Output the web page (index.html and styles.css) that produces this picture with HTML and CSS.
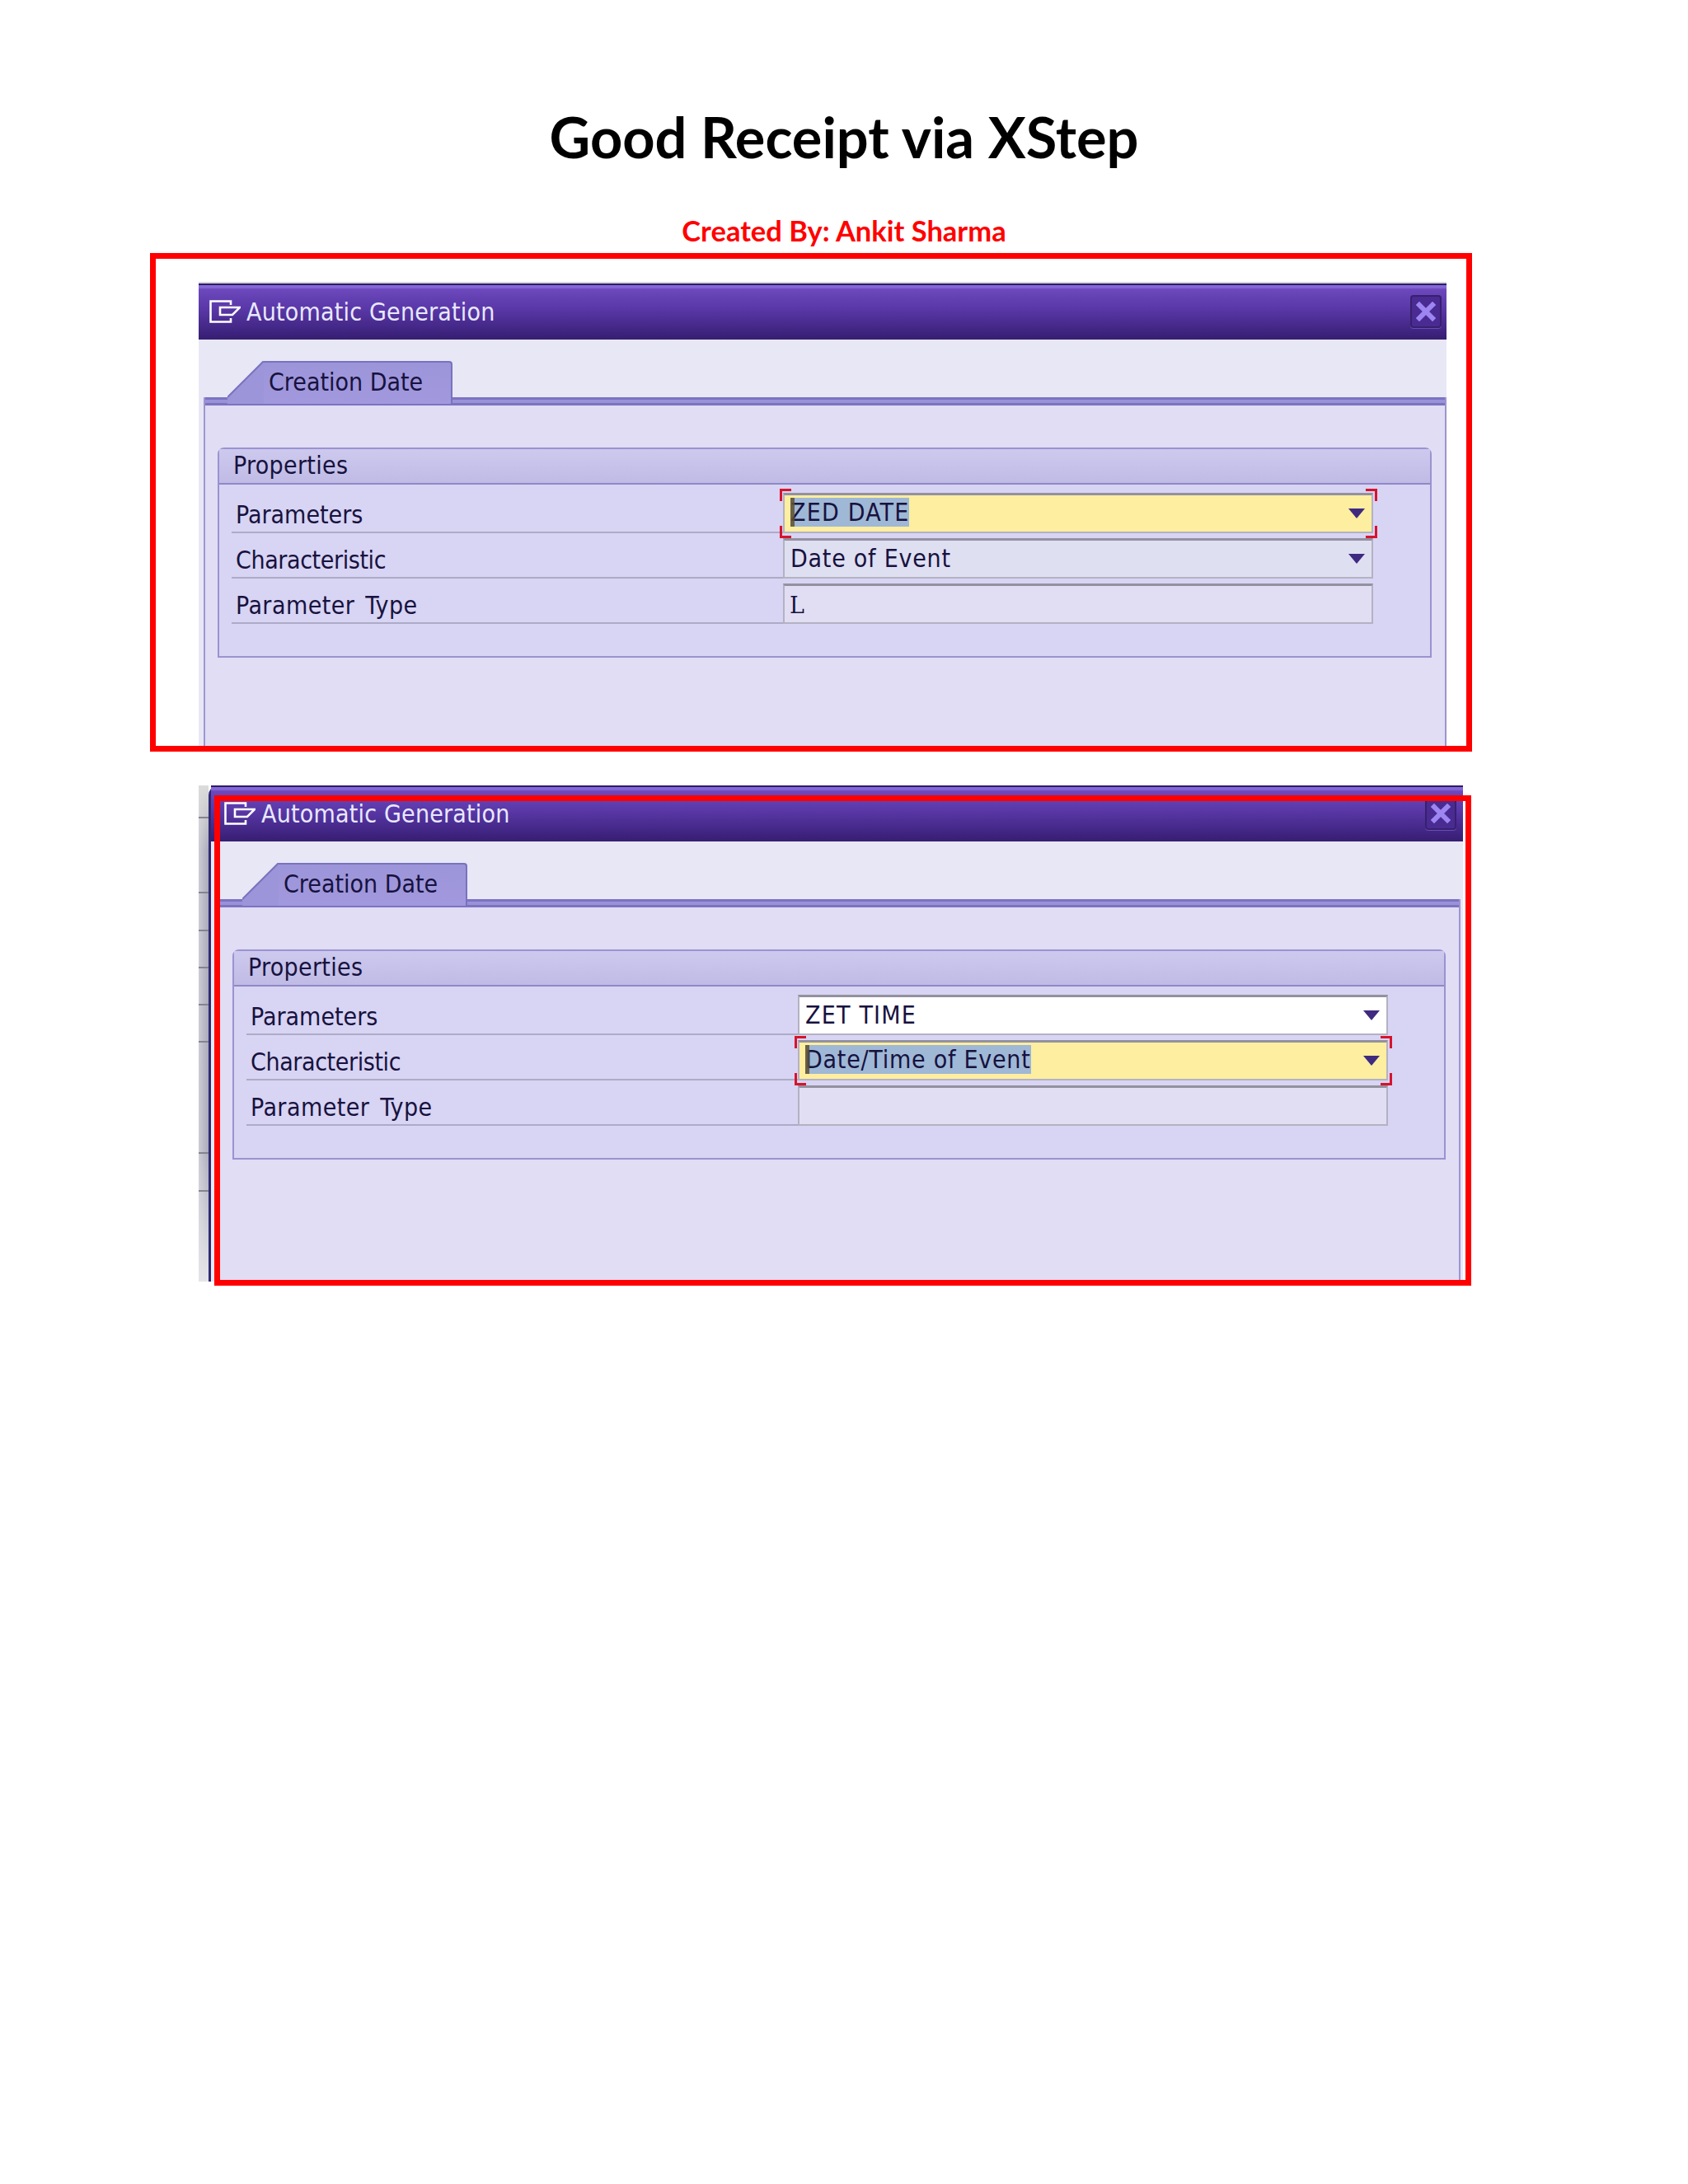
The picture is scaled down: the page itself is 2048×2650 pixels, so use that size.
FILE: index.html
```html
<!DOCTYPE html>
<html lang="en">
<head>
<meta charset="utf-8">
<title>Good Receipt via XStep</title>
<link rel="stylesheet" href="styles.css">
</head>
<body>
<main class="page">
  <h1 class="title">Good Receipt via XStep</h1>
  <p class="byline">Created By: Ankit Sharma</p>

  <section class="shot shot-one">
    <div class="dialog">
      <header class="titlebar">
        <svg class="win-icon" viewBox="0 0 38 28" aria-hidden="true"><path d="M26 6V1.5H1.5V26.5H26V22M13 18V9H37L28 18Z" fill="none" stroke="#fff" stroke-width="2.6"/></svg>
        <span class="title-text">Automatic Generation</span>
        <span class="close"><svg viewBox="0 0 24 24" aria-hidden="true"><path d="M4 4L20 20M20 4L4 20" stroke="#9d85f2" stroke-width="6" stroke-linecap="square"/></svg></span>
      </header>
      <div class="tabs">
        <div class="tab">
          <svg class="tab-slant" viewBox="0 0 44 52" preserveAspectRatio="none" aria-hidden="true"><path d="M0 44L44 0V52H0Z" fill="#9d95d9"/><path d="M0 44L44 0" stroke="#7a72be" stroke-width="2"/></svg>
          <span class="tab-label">Creation Date</span>
        </div>
      </div>
      <div class="panel">
        <div class="group">
          <div class="group-head">Properties</div>
          <div class="group-body">
            <div class="row">
              <span class="label">Parameters</span>
              <div class="field field-focus">
                <span class="sel upper"><i class="caret"></i>ZED DATE</span>
                <i class="arrow"></i>
                <i class="corner tl"></i><i class="corner tr"></i><i class="corner bl"></i><i class="corner br"></i>
              </div>
            </div>
            <div class="row">
              <span class="label label-tight">Characteristic</span>
              <div class="field field-off"><span class="val">Date of Event</span><i class="arrow"></i></div>
            </div>
            <div class="row">
              <span class="label label-wide">Parameter Type</span>
              <div class="field field-plain"><span class="val slab">L</span></div>
            </div>
          </div>
        </div>
      </div>
    </div>
  </section>

  <section class="shot shot-two">
    <div class="side-strip"></div>
    <div class="dialog dialog-framed">
      <header class="titlebar">
        <svg class="win-icon" viewBox="0 0 38 28" aria-hidden="true"><path d="M26 6V1.5H1.5V26.5H26V22M13 18V9H37L28 18Z" fill="none" stroke="#fff" stroke-width="2.6"/></svg>
        <span class="title-text">Automatic Generation</span>
        <span class="close"><svg viewBox="0 0 24 24" aria-hidden="true"><path d="M4 4L20 20M20 4L4 20" stroke="#9d85f2" stroke-width="6" stroke-linecap="square"/></svg></span>
      </header>
      <div class="tabs">
        <div class="tab">
          <svg class="tab-slant" viewBox="0 0 44 52" preserveAspectRatio="none" aria-hidden="true"><path d="M0 44L44 0V52H0Z" fill="#9d95d9"/><path d="M0 44L44 0" stroke="#7a72be" stroke-width="2"/></svg>
          <span class="tab-label">Creation Date</span>
        </div>
      </div>
      <div class="panel">
        <div class="group">
          <div class="group-head">Properties</div>
          <div class="group-body">
            <div class="row">
              <span class="label">Parameters</span>
              <div class="field field-white"><span class="val upper">ZET TIME</span><i class="arrow"></i></div>
            </div>
            <div class="row">
              <span class="label label-tight">Characteristic</span>
              <div class="field field-focus">
                <span class="sel"><i class="caret"></i>Date/Time of Event</span>
                <i class="arrow"></i>
                <i class="corner tl"></i><i class="corner tr"></i><i class="corner bl"></i><i class="corner br"></i>
              </div>
            </div>
            <div class="row">
              <span class="label label-wide">Parameter Type</span>
              <div class="field field-plain"></div>
            </div>
          </div>
        </div>
      </div>
    </div>
  </section>

  <div class="redbox redbox-one"></div>
  <div class="redbox redbox-two"></div>
</main>
</body>
</html>
```

FILE: styles.css
```css
* { box-sizing: border-box; }
html, body { margin: 0; background: #fff; }
.page { position: relative; width: 2048px; height: 2650px; padding-top: 122px; overflow: hidden; }

.title {
  margin: 0; height: 88px; text-align: center;
  font: 700 68.5px/88px Lato, "Liberation Sans", sans-serif; color: #000;
}
.byline {
  margin: 50px 0 0; height: 40px; text-align: center;
  font: 700 34.5px/40px Lato, "Liberation Sans", sans-serif; color: #f00;
}

.shot { display: flex; margin-left: 241px; overflow: hidden; }
.shot-one { margin-top: 42px; height: 565px; border-top: 2px solid #d4d4d8; width: 1514px; }
.shot-two { margin-top: 46px; height: 602px; width: 1534px; }

.side-strip {
  flex: none; width: 12px; height: 100%;
  background:
    linear-gradient(to bottom, #85838f 0 0) 0 38px / 100% 2px no-repeat,
    linear-gradient(to bottom, #85838f 0 0) 0 129px / 100% 2px no-repeat,
    linear-gradient(to bottom, #85838f 0 0) 0 175px / 100% 2px no-repeat,
    linear-gradient(to bottom, #85838f 0 0) 0 220px / 100% 2px no-repeat,
    linear-gradient(to bottom, #85838f 0 0) 0 265px / 100% 2px no-repeat,
    linear-gradient(to bottom, #85838f 0 0) 0 310px / 100% 2px no-repeat,
    linear-gradient(to bottom, #85838f 0 0) 0 445px / 100% 2px no-repeat,
    linear-gradient(to bottom, #85838f 0 0) 0 491px / 100% 2px no-repeat,
    linear-gradient(to bottom, #dcdcdc 0, transparent 80px, transparent 440px, #e4e4e8 600px),
    linear-gradient(to right, #cdcdd6, #aaaabb);
}

.dialog {
  --inset: 6px; --end: 0px; --pad: 13px; --close-end: 6px;
  flex: none; width: 1514px; height: 100%;
  background: #e7e7f6;
  font-family: "DejaVu Sans", "Liberation Sans", sans-serif;
  font-stretch: condensed;
  color: #17123f;
}
.dialog-framed {
  --inset: 9px; --end: 3px; --pad: 16px; --close-end: 8px;
  width: 1522px; border-left: 3px solid #2f2a72; border-top-left-radius: 12px;
}

.titlebar {
  display: flex; align-items: center; height: 68px; padding: 0 var(--close-end) 0 var(--pad);
  background: linear-gradient(to bottom, #2d1c66 0 2px, #8468d6 2px 5px, #6c48bc 7px, #5a38a8 30px, #3a2078 64px, #35206e 68px);
}
.win-icon { flex: none; width: 38px; height: 28px; margin-right: 7px; }
.title-text { font-size: 30px; letter-spacing: .2px; color: #e8e8ff; }
.close {
  margin-left: auto; display: flex; align-items: center; justify-content: center;
  width: 38px; height: 40px; background: #4a2b92; border: 2px solid #38206f; border-radius: 4px; box-shadow: 0 1px 0 #6a4cb4;
}
.close svg { width: 24px; height: 24px; }

.tabs { display: flex; align-items: flex-end; height: 70px; padding-left: calc(var(--inset) + 29px); }
.tab { position: relative; z-index: 1; display: flex; height: 52px; margin-bottom: -8px; }
.tab-slant { flex: none; width: 44px; height: 52px; }
.tab-label {
  width: 229px; padding: 5px 0 0 6px; font-size: 30px; line-height: 38px;
  background: linear-gradient(to bottom, #9d95d9, #a198dd); border-top: 2px solid #7a72be; border-right: 2px solid #7a72be; border-top-right-radius: 4px;
}

.panel {
  margin: 0 var(--end) 0 var(--inset); height: 600px;
  background: linear-gradient(to bottom, #7b73c2 0 3px, #9a92d8 3px 7px, #7b73c2 7px 10px) top / 100% 10px no-repeat, #e0ddf4;
  border-left: 2px solid #9c95d0; border-right: 2px solid #9c95d0;
  padding: 61px 16px 0 15px;
}
.group { height: 255px; background: #d8d4f3; border: 2px solid #9a93d0; border-top-left-radius: 8px; border-top-right-radius: 8px; }
.group-head {
  height: 43px; padding-left: 17px; font-size: 30px; line-height: 40px; letter-spacing: .3px;
  background: linear-gradient(to bottom, #cdc9ee, #bfbbe5); border-bottom: 2px solid #8f88c8;
}
.group-body { padding: 4px 0 0 15px; }
.row { display: flex; align-items: flex-end; height: 55px; }
.label {
  width: 669px; height: 55px; padding: 14px 0 0 5px; font-size: 30px; line-height: 38px;
  border-bottom: 2px solid #adabc6;
}
.label-tight { letter-spacing: -.4px; }
.label-wide { letter-spacing: .45px; word-spacing: 4px; }
.field {
  position: relative; display: flex; align-items: center;
  width: 716px; height: 49px; padding: 0 0 0 7px; flex: none;
  border: 2px solid #b3b2c2; border-top: 3px solid #93919f;
  font-size: 30px; letter-spacing: .75px;
}
.field .upper { letter-spacing: 1.2px; }
.field-focus { background: #fdeea0; }
.field-off { background: #dfdff2; }
.field-plain { background: #e1def4; }
.field-white { background: #fff; }
.val { line-height: 36px; }
.slab { font-family: "DejaVu Serif", "Liberation Serif", serif; font-stretch: normal; font-size: 27px; margin: 4px 0 0 -1px; }
.sel { position: relative; display: block; height: 35px; line-height: 35px; margin-top: -3px; background: #9fb8d6; }
.caret { position: absolute; left: 0; top: 0; width: 5px; height: 35px; background: #5e5030; opacity: .85; }
.arrow {
  position: absolute; right: 8px; top: 16px; width: 0; height: 0;
  border-left: 10px solid transparent; border-right: 10px solid transparent; border-top: 12px solid #3f2a80;
}
.corner { position: absolute; width: 14px; height: 15px; border: 0 solid #d6142c; }
.tl { left: -6px; top: -8px; border-left-width: 3px; border-top-width: 3px; }
.tr { right: -7px; top: -8px; border-right-width: 3px; border-top-width: 3px; }
.bl { left: -6px; bottom: -8px; border-left-width: 3px; border-bottom-width: 3px; }
.br { right: -7px; bottom: -8px; border-right-width: 3px; border-bottom-width: 3px; }

.redbox { position: absolute; border: 7px solid #f00; }
.redbox-one { left: 182px; top: 307px; width: 1604px; height: 605px; }
.redbox-two { left: 260px; top: 965px; width: 1525px; height: 595px; }
```
